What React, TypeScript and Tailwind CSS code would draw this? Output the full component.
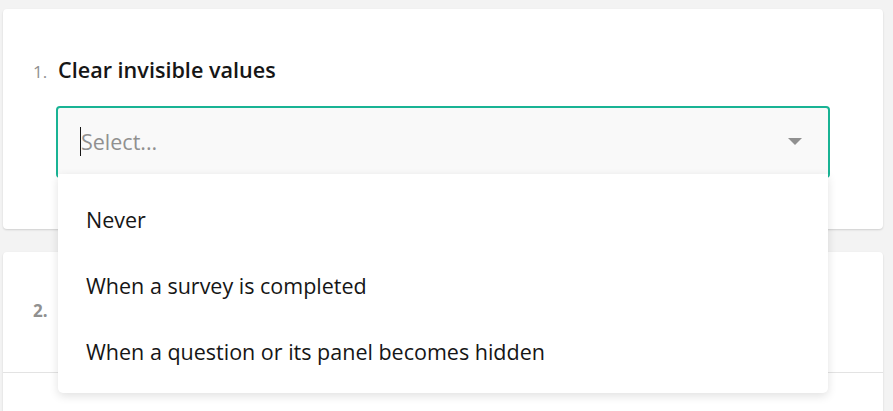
import React from "react";

const OPTIONS = [
  "Never",
  "When a survey is completed",
  "When a question or its panel becomes hidden",
];

function ChevronDown() {
  return (
    <svg width="14" height="7" viewBox="0 0 14 7" className="shrink-0">
      <polygon points="0,0 14,0 7,7" fill="#909090" />
    </svg>
  );
}

export default function App() {
  return (
    <div
      className="h-[411px] w-full overflow-hidden bg-[#f3f3f3] pl-[3px] pr-[10px] pt-[9px]"
      style={{ fontFamily: '"Open Sans", "Noto Sans", sans-serif' }}
    >
      {/* Question 1 */}
      <div className="relative z-10 h-[220px] rounded-[4px] bg-white pt-[47px] shadow-[0_1px_2px_rgba(0,0,0,0.15)]">
        <div className="flex items-baseline pl-[30px]">
          <span className="w-[25px] text-[17px] text-[#909090]">1.</span>
          <span className="text-[21.6px] font-semibold leading-[28px] text-[#161616]">
            Clear invisible values
          </span>
        </div>

        <div className="mx-[53px] mt-[21px] flex h-[72px] items-center justify-between rounded-[4px] border-2 border-[#19b394] bg-[#f9f9f9] pl-[22px] pr-[26px]">
          <div className="flex items-center">
            <span className="h-[29px] w-px bg-[#161616]" />
            <span className="text-[21.5px] leading-[28px] text-[#909090]">Select...</span>
          </div>
          <ChevronDown />
        </div>

        {/* Dropdown menu */}
        <div className="absolute left-[55px] top-[165px] w-[770px] rounded-b-[5px] bg-white pb-[8px] pt-[13px] shadow-[0_3px_10px_rgba(0,0,0,0.12)]">
          {OPTIONS.map((o) => (
            <div
              key={o}
              className="flex h-[66px] items-center pl-[28px] text-[21.5px] leading-[28px] text-[#161616]"
            >
              {o}
            </div>
          ))}
        </div>
      </div>

      {/* Question 2 */}
      <div className="mt-[23px] h-[200px] rounded-t-[4px] bg-white shadow-[0_1px_2px_rgba(0,0,0,0.15)]">
        <div className="flex h-[121px] items-center border-b border-[#e3e3e3] pl-[30px] pb-[2px]">
          <span className="text-[17px] font-bold text-[#909090]">2.</span>
        </div>
      </div>
    </div>
  );
}
